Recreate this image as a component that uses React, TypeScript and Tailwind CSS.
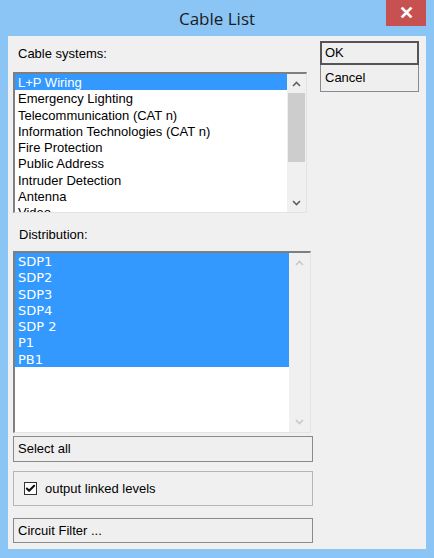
import { Check } from 'lucide-react';

const cableSystems = [
  'L+P Wiring',
  'Emergency Lighting',
  'Telecommunication (CAT n)',
  'Information Technologies (CAT n)',
  'Fire Protection',
  'Public Address',
  'Intruder Detection',
  'Antenna',
  'Video',
];

const distribution = ['SDP1', 'SDP2', 'SDP3', 'SDP4', 'SDP 2', 'P1', 'PB1'];

function Chevron({ up, color }: { up?: boolean; color: string }) {
  return (
    <svg width="9" height="6" viewBox="0 0 9 6">
      <path d={up ? 'M1 5 L4.5 1.5 L8 5' : 'M1 1 L4.5 4.5 L8 1'} fill="none" stroke={color} strokeWidth="1.6" />
    </svg>
  );
}

function Button({ label, className = '' }: { label: string; className?: string }) {
  return (
    <div className={`flex items-center border border-[#8a8a8a] bg-[#efefef] px-[4px] text-[13px] text-black ${className}`}>
      {label}
    </div>
  );
}

export default function App() {
  return (
    <div className="flex h-[558px] w-[434px] flex-col bg-[#8bc5f5] font-['Liberation_Sans',sans-serif]">
      {/* Title bar */}
      <div className="relative flex h-[36px] shrink-0 items-center justify-center">
        <span className="text-[17px] text-[#1b1b1b] font-['Open_Sans',sans-serif] mt-[1px]">Cable List</span>
        <div className="absolute right-[8px] top-0 flex h-[26px] w-[40px] items-center justify-center bg-[#c75050] text-[18px] font-bold text-white">
          ✕
        </div>
      </div>

      {/* Client area */}
      <div className="mx-[8px] flex h-[513px] bg-[#f0f0f0]">
        {/* Left column */}
        <div className="flex w-[306px] flex-col pl-[5px]">
          <div className="mt-[10px] h-[16px] pl-[5px] text-[13px] leading-[16px] text-black">Cable systems:</div>
          <div className="mt-[10px] flex h-[141px] w-[294px] border-l-2 border-t-2 border-[#7f7f7f] border-r border-b border-r-[#e3e3e3] border-b-[#e3e3e3] bg-white">
            <div className="flex-1 overflow-hidden">
              {cableSystems.map((name, i) => (
                <div
                  key={name}
                  className={`h-[16.3px] pl-[3px] pt-[1px] text-[13px] leading-[16px] ${
                    i === 0 ? 'bg-[#3399ff] text-white' : 'text-black'
                  }`}
                >
                  {name}
                </div>
              ))}
            </div>
            <div className="flex w-[19px] flex-col bg-[#f0f0f0]">
              <div className="flex h-[19px] items-center justify-center">
                <Chevron up color="#606060" />
              </div>
              <div className="mx-[1px] h-[69px] bg-[#cdcdcd]" />
              <div className="flex-1" />
              <div className="flex h-[19px] items-center justify-center">
                <Chevron color="#606060" />
              </div>
            </div>
          </div>

          <div className="mt-[14px] h-[16px] pl-[6px] text-[13px] leading-[16px] text-black">Distribution:</div>
          <div className="mt-[8px] flex h-[182px] w-[298px] border-l-2 border-t-2 border-[#7f7f7f] border-r border-b border-r-[#e3e3e3] border-b-[#e3e3e3] bg-white">
            <div className="flex-1 overflow-hidden">
              {distribution.map((name) => (
                <div
                  key={name}
                  className="h-[16.3px] bg-[#3399ff] pl-[3px] pt-[1px] font-['DejaVu_Sans',sans-serif] text-[13px] leading-[16px] text-white"
                >
                  {name}
                </div>
              ))}
            </div>
            <div className="flex w-[21px] flex-col bg-[#f0f0f0]">
              <div className="flex h-[20px] items-center justify-center">
                <Chevron up color="#c8c8c8" />
              </div>
              <div className="flex-1" />
              <div className="flex h-[20px] items-center justify-center">
                <Chevron color="#c8c8c8" />
              </div>
            </div>
          </div>

          <Button label="Select all" className="mt-[3px] h-[26px] w-[300px]" />

          <div className="mt-[9px] flex h-[35px] w-[300px] items-center border border-[#b5b5b5] pl-[10px]">
            <div className="flex h-[13px] w-[13px] items-center justify-center border border-[#333333] bg-white">
              <Check size={11} strokeWidth={4.5} color="#111111" />
            </div>
            <span className="ml-[8px] text-[13px] text-black">output linked levels</span>
          </div>

          <Button label="Circuit Filter ..." className="mt-[12px] h-[25px] w-[300px]" />
        </div>

        {/* Right column */}
        <div className="ml-[6px] flex flex-col pt-[5px]">
          <div className="flex h-[24px] w-[99px] items-center border-2 border-[#555555] bg-[#efefef] px-[3px] text-[13px] text-black">
            OK
          </div>
          <Button label="Cancel" className="h-[27px] w-[99px] border-t-0" />
        </div>
      </div>
    </div>
  );
}
